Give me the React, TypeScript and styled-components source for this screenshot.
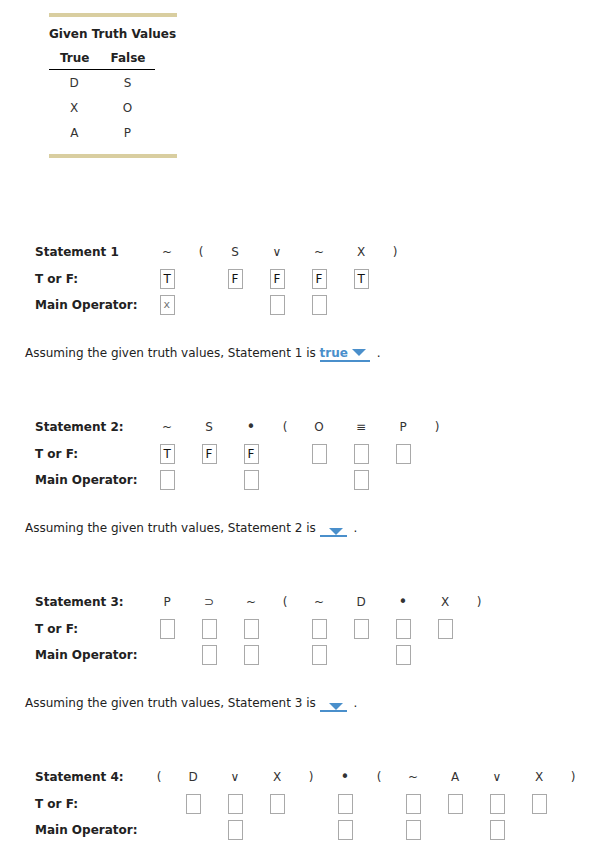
import React from 'react';
import styled, { createGlobalStyle } from 'styled-components';

const GlobalStyle = createGlobalStyle`
  body {
    margin: 0;
    background: #ffffff;
    font-family: "DejaVu Sans", Verdana, sans-serif;
    font-size: 12px;
    color: #222222;
  }
`;

const Page = styled.div`
  padding: 13px 0 0;
`;

// given truth values block
const GivenBox = styled.div`
  margin-left: 49px;
  margin-bottom: 81px;
  width: 128px;
  border-top: 4px solid #d9cea0;
  border-bottom: 4px solid #d9cea0;
  padding-bottom: 9px;
`;

const GivenCaption = styled.div`
  font-weight: bold;
  line-height: 18px;
  padding: 8px 0 2px;
  white-space: nowrap;
`;

const GivenTable = styled.table`
  border-collapse: collapse;

  th {
    font-weight: bold;
    line-height: 18px;
    padding: 4px 10px 2px 11px;
    border-bottom: 1px solid #000000;
  }

  td {
    height: 25px;
    padding: 0;
    text-align: center;
    color: #333333;
  }
`;

// statements
const Section = styled.div<{ $last?: boolean }>`
  margin-bottom: ${p => (p.$last ? 0 : 51.75)}px;
`;

const StatementTable = styled.table`
  border-collapse: collapse;
  table-layout: fixed;
  margin-left: 35px;
  margin-bottom: 25.75px;
`;

const LabelCell = styled.td`
  width: 111px;
  height: 26.5px;
  padding: 0;
  font-weight: bold;
  white-space: nowrap;
  vertical-align: middle;
`;

const SymCell = styled.td<{ $paren?: boolean; $big?: boolean }>`
  width: ${p => (p.$paren ? 26 : 42)}px;
  padding: 0;
  text-align: center;
  vertical-align: middle;
  color: #333333;
  font-size: ${p => (p.$big ? 15 : 12)}px;
`;

const AnswerBox = styled.div<{ $faint?: boolean }>`
  box-sizing: border-box;
  width: 15px;
  height: 20px;
  margin: 0 auto;
  border: 1px solid #a9a9a9;
  padding-left: 3px;
  text-align: left;
  line-height: 18px;
  font-size: ${p => (p.$faint ? 11 : 12)}px;
  color: ${p => (p.$faint ? '#777777' : '#111111')};
`;

const Sentence = styled.div`
  margin-left: 25px;
  line-height: 18px;
`;

const Select = styled.span`
  display: inline-flex;
  align-items: center;
  gap: 4px;
  padding-right: 4px;
  border-bottom: 2px solid #4a8fcb;
  line-height: 14px;
  color: #4a8fcb;
  font-weight: bold;
`;

const SelectValue = styled.span`
  min-width: 5px;
`;

const Caret = styled.span`
  width: 0;
  height: 0;
  border-left: 7px solid transparent;
  border-right: 7px solid transparent;
  border-top: 7px solid #4a8fcb;
  margin-top: -2px;
`;

const Dot = styled.span`
  margin-left: 3px;
`;

type Col = { sym: string; tf?: string; main?: string; paren?: boolean };

type Statement = { label: string; cols: Col[]; answer: string };

const P = (sym: string): Col => ({ sym, paren: true });

const statements: Statement[] = [
  {
    label: 'Statement 1',
    answer: 'true',
    cols: [
      { sym: '~', tf: 'T', main: 'x' },
      P('('),
      { sym: 'S', tf: 'F' },
      { sym: '∨', tf: 'F', main: '' },
      { sym: '~', tf: 'F', main: '' },
      { sym: 'X', tf: 'T' },
      P(')'),
    ],
  },
  {
    label: 'Statement 2:',
    answer: '',
    cols: [
      { sym: '~', tf: 'T', main: '' },
      { sym: 'S', tf: 'F' },
      { sym: '•', tf: 'F', main: '' },
      P('('),
      { sym: 'O', tf: '' },
      { sym: '≡', tf: '', main: '' },
      { sym: 'P', tf: '' },
      P(')'),
    ],
  },
  {
    label: 'Statement 3:',
    answer: '',
    cols: [
      { sym: 'P', tf: '' },
      { sym: '⊃', tf: '', main: '' },
      { sym: '~', tf: '', main: '' },
      P('('),
      { sym: '~', tf: '', main: '' },
      { sym: 'D', tf: '' },
      { sym: '•', tf: '', main: '' },
      { sym: 'X', tf: '' },
      P(')'),
    ],
  },
  {
    label: 'Statement 4:',
    answer: '',
    cols: [
      P('('),
      { sym: 'D', tf: '' },
      { sym: '∨', tf: '', main: '' },
      { sym: 'X', tf: '' },
      P(')'),
      { sym: '•', tf: '', main: '' },
      P('('),
      { sym: '~', tf: '', main: '' },
      { sym: 'A', tf: '' },
      { sym: '∨', tf: '', main: '' },
      { sym: 'X', tf: '' },
      P(')'),
    ],
  },
];

const given = [
  ['D', 'S'],
  ['X', 'O'],
  ['A', 'P'],
];

const box = (value: string | undefined) =>
  value === undefined ? null : <AnswerBox $faint={value === 'x'}>{value}</AnswerBox>;

const StatementBlock: React.FC<{ s: Statement; n: number; last: boolean }> = ({ s, n, last }) => (
  <Section $last={last}>
    <StatementTable>
      <tbody>
        <tr>
          <LabelCell>{s.label}</LabelCell>
          {s.cols.map((c, i) => (
            <SymCell key={i} $paren={c.paren} $big={c.sym === '•'}>{c.sym}</SymCell>
          ))}
        </tr>
        <tr>
          <LabelCell>T or F:</LabelCell>
          {s.cols.map((c, i) => (
            <SymCell key={i} $paren={c.paren}>{box(c.tf)}</SymCell>
          ))}
        </tr>
        <tr>
          <LabelCell>Main Operator:</LabelCell>
          {s.cols.map((c, i) => (
            <SymCell key={i} $paren={c.paren}>{box(c.main)}</SymCell>
          ))}
        </tr>
      </tbody>
    </StatementTable>
    {!last && (
      <Sentence>
        Assuming the given truth values, Statement {n} is{' '}
        <Select>
          <SelectValue>{s.answer}</SelectValue>
          <Caret />
        </Select>{' '}
        <Dot>.</Dot>
      </Sentence>
    )}
  </Section>
);

const App: React.FC<{}> = () => {
  return (
    <Page>
      <GlobalStyle />
      <GivenBox>
        <GivenCaption>Given Truth Values</GivenCaption>
        <GivenTable>
          <thead>
            <tr>
              <th>True</th>
              <th>False</th>
            </tr>
          </thead>
          <tbody>
            {given.map((row, i) => (
              <tr key={i}>
                <td>{row[0]}</td>
                <td>{row[1]}</td>
              </tr>
            ))}
          </tbody>
        </GivenTable>
      </GivenBox>
      {statements.map((s, i) => (
        <StatementBlock key={i} s={s} n={i + 1} last={i === statements.length - 1} />
      ))}
    </Page>
  );
};

export default App;
